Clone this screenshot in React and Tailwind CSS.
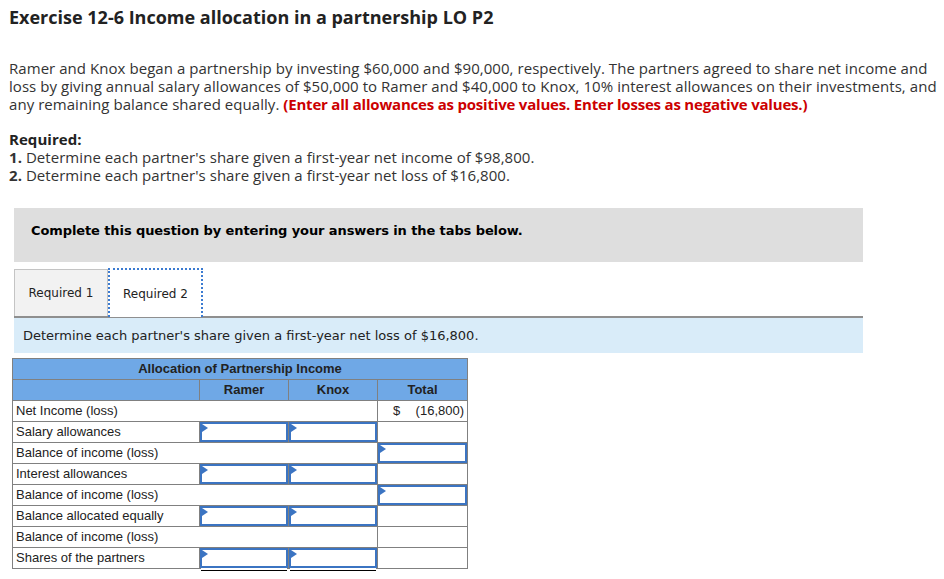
import React from 'react';

const Flag = () => (
  <span className="absolute left-0 top-0 w-0 h-0 border-t-[4px] border-b-[4px] border-l-[6px] border-t-transparent border-b-transparent border-l-[#3b74c2]"></span>
);

const InputCell = ({ topBlack, doubleBottom }) => (
  <td className={`p-0 h-[20px] border border-[#808080] ${topBlack ? 'border-t-black' : ''}`}>
    <div className={`relative h-[20px] border-2 border-[#3b74c2] bg-white ${doubleBottom ? 'shadow-[0_3px_0_-1px_white,0_4px_0_-1px_black]' : ''}`}>
      <Flag />
    </div>
  </td>
);

const rows = [
  { label: 'Net Income (loss)', kind: 'span', total: 'value' },
  { label: 'Salary allowances', kind: 'inputs', total: 'empty' },
  { label: 'Balance of income (loss)', kind: 'span', total: 'input', totalTopBlack: true },
  { label: 'Interest allowances', kind: 'inputs', total: 'empty' },
  { label: 'Balance of income (loss)', kind: 'span', total: 'input' },
  { label: 'Balance allocated equally', kind: 'inputs', total: 'empty' },
  { label: 'Balance of income (loss)', kind: 'span', total: 'empty', totalTopBlack: true },
  { label: 'Shares of the partners', kind: 'inputs', total: 'empty', last: true }
];

const AllocationTable = () => (
  <table className="ml-[12px] mt-[5px] border-collapse table-fixed w-[455px] text-[13px] text-[#222]" style={{ fontFamily: '"Liberation Sans", Arial, sans-serif' }}>
    <colgroup>
      <col className="w-[187px]" />
      <col className="w-[89px]" />
      <col className="w-[89px]" />
      <col className="w-[90px]" />
    </colgroup>
    <thead>
      <tr className="bg-[#6fa8e6] h-[21px]">
        <th colSpan={4} className="border border-[#808080] font-bold text-center p-0">Allocation of Partnership Income</th>
      </tr>
      <tr className="bg-[#6fa8e6] h-[21px]">
        <th className="border border-[#808080] p-0"></th>
        <th className="border border-[#808080] font-bold text-center p-0">Ramer</th>
        <th className="border border-[#808080] font-bold text-center p-0">Knox</th>
        <th className="border border-[#808080] font-bold text-center p-0">Total</th>
      </tr>
    </thead>
    <tbody>
      {rows.map((r, i) => (
        <tr key={i} className="h-[20px]">
          {r.kind === 'span' ? (
            <td colSpan={3} className="border border-[#808080] px-[3px] py-0 leading-[20px] whitespace-nowrap">{r.label}</td>
          ) : (
            <>
              <td className="border border-[#808080] px-[3px] py-0 leading-[20px] whitespace-nowrap">{r.label}</td>
              <InputCell doubleBottom={r.last} />
              <InputCell doubleBottom={r.last} />
            </>
          )}
          {r.total === 'value' && (
            <td className="border border-[#808080] px-[3px] py-0 leading-[20px]">
              <div className="flex justify-between pl-[12px]">
                <span>$</span>
                <span>(16,800)</span>
              </div>
            </td>
          )}
          {r.total === 'empty' && (
            <td className={`border border-[#808080] p-0 ${r.totalTopBlack ? 'border-t-black' : ''}`}></td>
          )}
          {r.total === 'input' && <InputCell topBlack={r.totalTopBlack} />}
        </tr>
      ))}
    </tbody>
  </table>
);

export default function App() {
  return (
    <div className="w-[944px] h-[579px] bg-white overflow-hidden">
      <div className="px-[9px] pt-[5px] text-[#333] whitespace-nowrap" style={{ fontFamily: '"Open Sans", Lato, sans-serif' }}>
        <h1 className="text-[18px] font-bold text-[#222] leading-[24px]">Exercise 12-6 Income allocation in a partnership LO P2</h1>
        <p className="mt-[30px] text-[15px] leading-[18px] tracking-[0.05px]">
          Ramer and Knox began a partnership by investing $60,000 and $90,000, respectively. The partners agreed to share net income and<br />
          loss by giving annual salary allowances of $50,000 to Ramer and $40,000 to Knox, 10% interest allowances on their investments, and<br />
          any remaining balance shared equally. <span className="font-bold text-[#cc0000] tracking-[-0.2px]">(Enter all allowances as positive values. Enter losses as negative values.)</span>
        </p>
        <div className="mt-[17px] text-[15px] leading-[18px] tracking-[0.05px]">
          <div className="font-bold text-[#222]">Required:</div>
          <div><span className="font-bold">1.</span> Determine each partner's share given a first-year net income of $98,800.</div>
          <div><span className="font-bold">2.</span> Determine each partner's share given a first-year net loss of $16,800.</div>
        </div>
      </div>

      <div className="ml-[14px] mt-[24px] w-[849px]" style={{ fontFamily: '"DejaVu Sans", Verdana, sans-serif' }}>
        <div className="h-[54px] bg-[#dedede] flex items-center pl-[17px] pb-[8px]">
          <span className="text-[13px] font-bold text-black tracking-[-0.1px]">Complete this question by entering your answers in the tabs below.</span>
        </div>
        <div className="mt-[7px] flex items-end h-[47px]">
          <div className="w-[94px] h-[47px] bg-[#f2f2f2] border border-b-0 border-[#c4c4c4] flex items-center justify-center text-[12px] text-[#222]">Required 1</div>
          <div className="w-[95px] h-[49px] bg-white border-2 border-b-0 border-dotted border-[#3b7bd1] flex items-center justify-center text-[12px] text-[#222] mb-[-1px] relative z-10">Required 2</div>
        </div>
        <div className="h-[37px] bg-[#d9ecf9] border-t-2 border-[#8f8f8f] flex items-center pl-[9px] text-[13px] text-[#222]">
          Determine each partner's share given a first-year net loss of $16,800.
        </div>
      </div>

      <AllocationTable />
    </div>
  );
}
